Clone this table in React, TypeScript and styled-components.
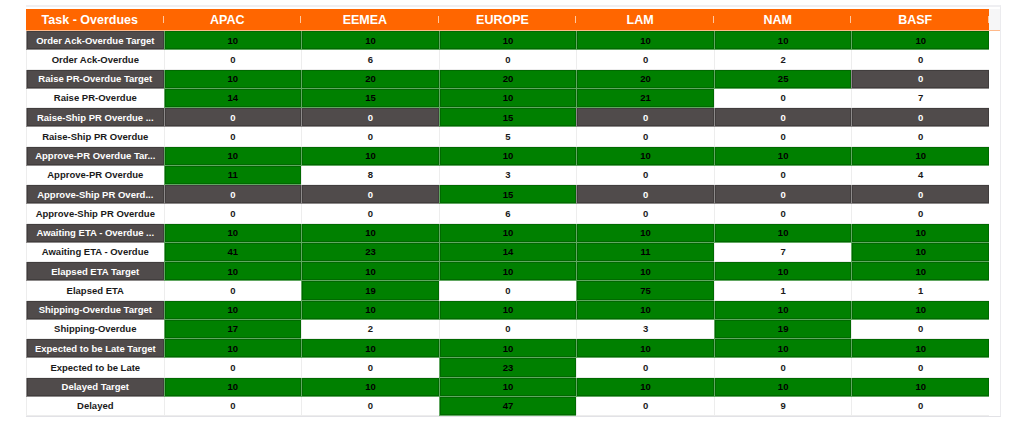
import styled, { createGlobalStyle } from "styled-components";

const GlobalStyle = createGlobalStyle`
  html, body {
    margin: 0;
    padding: 0;
    background: #ffffff;
    font-family: "Liberation Sans", Arial, sans-serif;
  }
`;

type Tone = "green" | "dark" | "white";

const bg: Record<Tone, string> = {
  green: "#008000",
  dark: "#504b4b",
  white: "#ffffff",
};

const fg: Record<Tone, string> = {
  green: "#000000",
  dark: "#ffffff",
  white: "#1a1a1a",
};

const Frame = styled.div`
  margin: 5px 0 0 26px;
  width: 974px;
  border-top: 2px solid #efeff2;
  border-right: 1px solid #ebebee;
  border-bottom: 1px solid #e2e2e6;
  padding-top: 2px;
`;

const HeaderRow = styled.div`
  display: grid;
  grid-template-columns: repeat(7, 1fr) 11px;
  height: 22px;
  box-sizing: border-box;
  border-bottom: 1px solid #ffb98a;
`;

const HeaderCell = styled.div`
  position: relative;
  display: flex;
  align-items: center;
  justify-content: center;
  padding-right: 10px;
  background: #ff6600;
  color: #ffffff;
  font-size: 12.5px;
  font-weight: bold;

  &::after {
    content: "";
    position: absolute;
    right: 0;
    top: 7px;
    width: 1px;
    height: 7px;
    background: #ffc8a0;
  }
`;

const Gutter = styled.div`
  background: #f6f6f7;
`;

const Body = styled.div`
  padding-right: 11px;
`;

const Row = styled.div`
  display: grid;
  grid-template-columns: repeat(7, 1fr);
  height: 19.25px;
`;

const Cell = styled.div<{ $tone: Tone }>`
  display: flex;
  align-items: center;
  justify-content: center;
  min-width: 0;
  box-sizing: border-box;
  padding: 0 4px;
  background: ${(p) => bg[p.$tone]};
  color: ${(p) => fg[p.$tone]};
  border-left: 1px solid rgba(215, 215, 215, 0.45);
  border-bottom: 1px solid rgba(215, 215, 215, 0.45);
  box-shadow: ${(p) =>
    p.$tone === "white" ? "none" : "inset 0 0 0 1px rgba(0, 0, 0, 0.18)"};
  font-size: 9.5px;
  font-weight: bold;
  white-space: nowrap;
  overflow: hidden;
`;

const columns = ["APAC", "EEMEA", "EUROPE", "LAM", "NAM", "BASF"];

// g = green, d = dark, w = white
const rows: [string, boolean, string, number[]][] = [
  ["Order Ack-Overdue Target", true, "gggggg", [10, 10, 10, 10, 10, 10]],
  ["Order Ack-Overdue", false, "wwwwww", [0, 6, 0, 0, 2, 0]],
  ["Raise PR-Overdue Target", true, "gggggd", [10, 20, 20, 20, 25, 0]],
  ["Raise PR-Overdue", false, "ggggww", [14, 15, 10, 21, 0, 7]],
  ["Raise-Ship PR Overdue ...", true, "ddgddd", [0, 0, 15, 0, 0, 0]],
  ["Raise-Ship PR Overdue", false, "wwwwww", [0, 0, 5, 0, 0, 0]],
  ["Approve-PR Overdue Tar...", true, "gggggg", [10, 10, 10, 10, 10, 10]],
  ["Approve-PR Overdue", false, "gwwwww", [11, 8, 3, 0, 0, 4]],
  ["Approve-Ship PR Overd...", true, "ddgddd", [0, 0, 15, 0, 0, 0]],
  ["Approve-Ship PR Overdue", false, "wwwwww", [0, 0, 6, 0, 0, 0]],
  ["Awaiting ETA - Overdue ...", true, "gggggg", [10, 10, 10, 10, 10, 10]],
  ["Awaiting ETA - Overdue", false, "ggggwg", [41, 23, 14, 11, 7, 10]],
  ["Elapsed ETA Target", true, "gggggg", [10, 10, 10, 10, 10, 10]],
  ["Elapsed ETA", false, "wgwgww", [0, 19, 0, 75, 1, 1]],
  ["Shipping-Overdue Target", true, "gggggg", [10, 10, 10, 10, 10, 10]],
  ["Shipping-Overdue", false, "gwwwgw", [17, 2, 0, 3, 19, 0]],
  ["Expected to be Late Target", true, "gggggg", [10, 10, 10, 10, 10, 10]],
  ["Expected to be Late", false, "wwgwww", [0, 0, 23, 0, 0, 0]],
  ["Delayed Target", true, "gggggg", [10, 10, 10, 10, 10, 10]],
  ["Delayed", false, "wwgwww", [0, 0, 47, 0, 9, 0]],
];

const toneOf = (c: string): Tone =>
  c === "g" ? "green" : c === "d" ? "dark" : "white";

const App = () => {
  return (
    <>
      <GlobalStyle />
      <Frame>
        <HeaderRow>
          <HeaderCell>Task - Overdues</HeaderCell>
          {columns.map((c) => (
            <HeaderCell key={c}>{c}</HeaderCell>
          ))}
          <Gutter />
        </HeaderRow>
        <Body>
          {rows.map(([label, target, tones, values]) => (
            <Row key={label}>
              <Cell $tone={target ? "dark" : "white"}>{label}</Cell>
              {values.map((v, i) => (
                <Cell key={i} $tone={toneOf(tones[i])}>
                  {v}
                </Cell>
              ))}
            </Row>
          ))}
        </Body>
      </Frame>
    </>
  );
};

export default App;
